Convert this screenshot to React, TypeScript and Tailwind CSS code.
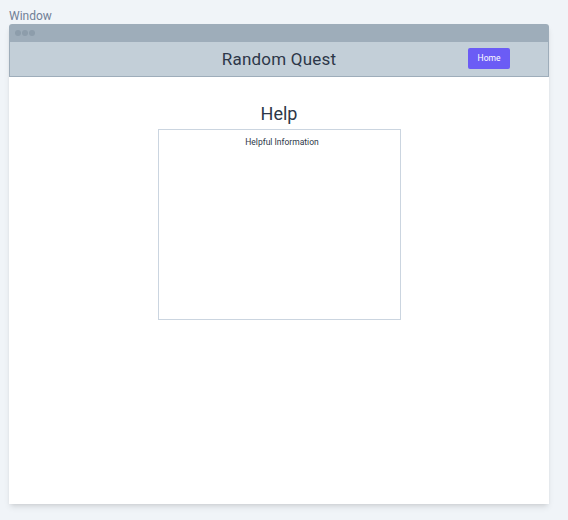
export default function App() {
    return (
        <div className="w-[568px] h-[520px] bg-[#f0f4f8] pt-[9px] px-[9px]" style={{ fontFamily: 'Roboto, "Noto Sans", sans-serif' }}>
            <div className="text-[12px] leading-[15px] text-[#718096]">Window</div>
            <div className="w-[540px] h-[480px] bg-white shadow-md rounded-t-[3px] flex flex-col">
                <div className="h-[18px] bg-[#9eadba] rounded-t-[3px] flex items-center gap-[1px] pl-[6px]">
                    <span className="w-[6px] h-[6px] rounded-full bg-[#8d9dab]" />
                    <span className="w-[6px] h-[6px] rounded-full bg-[#8d9dab]" />
                    <span className="w-[6px] h-[6px] rounded-full bg-[#8d9dab]" />
                </div>
                <div className="h-[35px] bg-[#c3cfd8] border border-t-0 border-[#9eadba] relative flex items-center justify-center">
                    <h1 className="text-[17px] tracking-[0.2px] text-[#2d3748] pt-[1px]">Random Quest</h1>
                    <button className="absolute right-[38px] top-[6px] h-[21px] w-[42px] rounded-[2px] bg-[#6b5cf5] text-white text-[8.5px]">
                        Home
                    </button>
                </div>
                <div className="flex flex-col items-center pt-[25px]">
                    <h2 className="text-[18px] leading-[24px] text-[#2d3748]">Help</h2>
                    <div className="mt-[3px] w-[243px] h-[191px] border border-[#cbd5e0] flex justify-center pt-[6px] pl-[6px]">
                        <p className="text-[8.5px] leading-[12px] text-[#2d3748]">Helpful Information</p>
                    </div>
                </div>
            </div>
        </div>
    );
}
